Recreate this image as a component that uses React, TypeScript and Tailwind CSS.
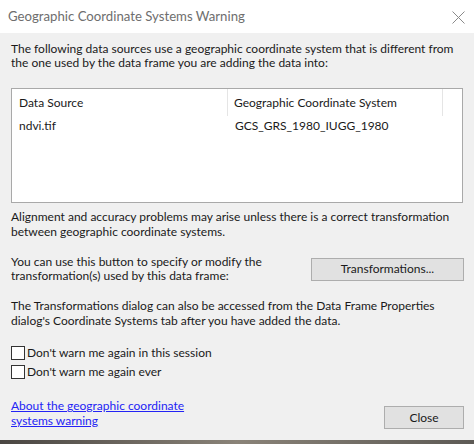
import React from "react";

const Checkbox = ({ label }: { label: string }) => (
  <label className="flex items-center h-[19px]">
    <span className="w-[14px] h-[14px] border border-[#333333] bg-white mr-[2px]" />
    <span>{label}</span>
  </label>
);

const App = () => {
  return (
    <div
      className="w-[474px] h-[444px] flex flex-col bg-[#f0f0f0] text-[12px] text-[#1a1a1a] overflow-hidden whitespace-nowrap"
      style={{ fontFamily: 'Lato, "Noto Sans", sans-serif' }}
    >
      {/* Title bar */}
      <div className="h-[33px] bg-white flex items-center justify-between pl-[8px] pr-[9px] shrink-0">
        <span className="text-[13.2px] text-[#6e6e6e]">
          Geographic Coordinate Systems Warning
        </span>
        <svg width="13" height="13" viewBox="0 0 13 13" className="mt-[1px]">
          <path d="M0.5 0.5 L12.5 12.5 M12.5 0.5 L0.5 12.5" stroke="#8a8a8a" strokeWidth="1" />
        </svg>
      </div>

      {/* Body */}
      <div className="flex-1 flex flex-col px-[11px] pt-[9px] leading-[14px]">
        <p>
          The following data sources use a geographic coordinate system that is different from
          <br />
          the one used by the data frame you are adding the data into:
        </p>

        {/* List */}
        <div className="mt-[18px] h-[115px] border border-[#a9a9a9] bg-white">
          <div className="flex h-[27px] items-center">
            <div className="w-[216px] pl-[7px] h-full flex items-center border-r border-[#e5e5e5]">
              Data Source
            </div>
            <div className="w-[215px] pl-[6px] h-full flex items-center border-r border-[#e5e5e5]">
              Geographic Coordinate System
            </div>
          </div>
          <div className="flex h-[20px] items-center">
            <div className="w-[216px] pl-[7px]">ndvi.tif</div>
            <div className="pl-[7px]">GCS_GRS_1980_IUGG_1980</div>
          </div>
        </div>

        <p className="mt-[6px] leading-[15px]">
          Alignment and accuracy problems may arise unless there is a correct transformation
          <br />
          between geographic coordinate systems.
        </p>

        <div className="mt-[16px] flex items-center justify-between">
          <p>
            You can use this button to specify or modify the
            <br />
            transformation(s) used by this data frame:
          </p>
          <button className="w-[153px] h-[23px] bg-[#e1e1e1] border border-[#adadad] mr-[-1px]">
            Transformations...
          </button>
        </div>

        <p className="mt-[15px] leading-[15px]">
          The Transformations dialog can also be accessed from the Data Frame Properties
          <br />
          dialog's Coordinate Systems tab after you have added the data.
        </p>

        <div className="mt-[15px] flex flex-col">
          <Checkbox label="Don't warn me again in this session" />
          <Checkbox label="Don't warn me again ever" />
        </div>

        <div className="mt-[17px] flex items-start justify-between">
          <a className="text-[#2323f5] underline leading-[15px]">
            About the geographic coordinate
            <br />
            systems warning
          </a>
          <button className="mt-[8px] w-[80px] h-[23px] bg-[#e1e1e1] border border-[#adadad] mr-[-1px]">
            Close
          </button>
        </div>
      </div>

      {/* Background behind the dialog */}
      <div className="h-[4px] shrink-0 bg-gradient-to-r from-[#4a4642] via-[#8a8378] to-[#5d5a55]" />
    </div>
  );
};

export default App;
